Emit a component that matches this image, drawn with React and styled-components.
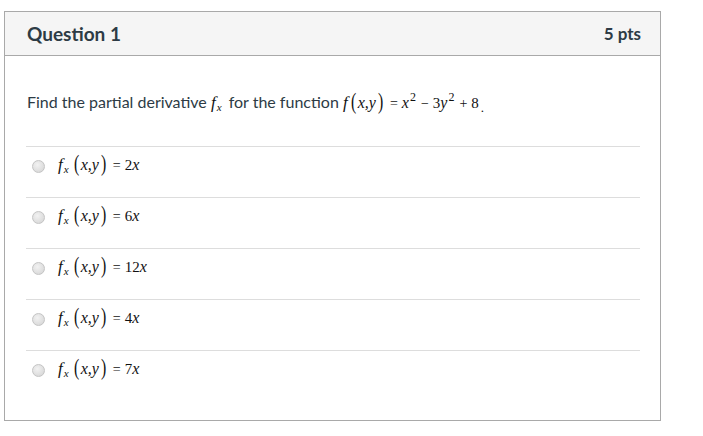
import React from "react";
import styled, { createGlobalStyle } from "styled-components";

const options = ["2x", "6x", "12x", "4x", "7x"];

export default function App() {
	return (
		<>
			<GlobalStyle />
			<Card>
				<Header>
					<Title>Question 1</Title>
					<Points>5 pts</Points>
				</Header>
				<Body>
					<Prompt>
						Find the partial derivative{" "}
						<Formula>
							<Fn>f</Fn>
							<Sub>x</Sub>
						</Formula>{" "}
						for the function{" "}
						<Formula>
							<Fn>f</Fn>
							<Paren>(</Paren>
							<Var>x,y</Var>
							<Paren>)</Paren>
							<Op>=</Op>
							<Var>x</Var>
							<Sup>2</Sup>
							<Op>−</Op>
							<span>3</span>
							<Var>y</Var>
							<Sup>2</Sup>
							<Op>+</Op>
							<span>8</span>
							<Dot>.</Dot>
						</Formula>
					</Prompt>
					<Answers>
						{options.map((opt) => (
							<Answer key={opt}>
								<Radio />
								<Formula>
									<Fn>f</Fn>
									<Sub>x</Sub>
									<Paren>(</Paren>
									<Var>x,y</Var>
									<Paren>)</Paren>
									<Op>=</Op>
									<span>{opt.slice(0, -1)}</span>
									<Var>x</Var>
								</Formula>
							</Answer>
						))}
					</Answers>
				</Body>
			</Card>
		</>
	);
}

const GlobalStyle = createGlobalStyle`
	body {
		margin: 0;
		padding: 11px 0 0 4px;
		background: #fff;
		font-family: Lato, "Liberation Sans", sans-serif;
		color: #2d3b45;
	}
`;

const Card = styled.div`
	width: 657px;
	height: 410px;
	box-sizing: border-box;
	border: 1px solid #a9a9a9;
	display: flex;
	flex-direction: column;
`;
const Header = styled.div`
	height: 44px;
	box-sizing: border-box;
	background: #f5f5f5;
	border-bottom: 1px solid #a9a9a9;
	display: flex;
	align-items: center;
	justify-content: space-between;
	padding: 0 19px 1px 22px;
`;
const Title = styled.div`
	font-size: 19px;
	font-weight: 700;
	color: #2d3b45;
`;
const Points = styled.div`
	font-size: 17px;
	font-weight: 700;
	color: #2d3b45;
`;
const Body = styled.div`
	padding: 35px 20px 0 21px;
`;
const Prompt = styled.div`
	font-size: 16px;
	line-height: 22px;
	height: 22px;
	padding-left: 1px;
	margin-bottom: 33px;
	white-space: nowrap;
`;
const Answers = styled.div`
	display: flex;
	flex-direction: column;
`;
const Answer = styled.div`
	height: 51px;
	box-sizing: border-box;
	border-top: 1px solid #dddddd;
	padding: 7px 0 0 6px;
	display: flex;
	align-items: flex-start;
	gap: 13px;
	line-height: 22px;
`;
const Radio = styled.span`
	width: 11px;
	height: 11px;
	margin-top: 6px;
	border-radius: 50%;
	border: 1px solid #c4c4c4;
	background: radial-gradient(circle at 40% 35%, #f2f2f2 0%, #dcdcdc 70%, #cfcfcf 100%);
	flex: none;
`;
const Formula = styled.span`
	font-family: "Liberation Serif", "Times New Roman", serif;
	font-size: 15px;
	color: #111;
	display: inline-flex;
	align-items: baseline;
	vertical-align: baseline;
	height: 22px;
`;
const Fn = styled.span`
	font-style: italic;
	font-size: 17px;
	margin-right: 1px;
`;
const Sub = styled.span`
	font-style: italic;
	font-size: 11px;
	position: relative;
	top: 3px;
	margin-right: 3px;
`;
const Paren = styled.span`
	display: inline-block;
	font-size: 15px;
	transform: scale(1.05, 1.6);
	transform-origin: 50% 65%;
	margin: 0 2px;
`;
const Var = styled.span`
	font-style: italic;
	font-size: 16px;
`;
const Op = styled.span`
	font-size: 14px;
	margin: 0 4px 0 5px;
`;
const Sup = styled.span`
	font-size: 12px;
	position: relative;
	top: -7px;
	margin-left: 1px;
`;
const Dot = styled.span`
	font-size: 13px;
	position: relative;
	top: 4px;
	margin-left: 2px;
`;
